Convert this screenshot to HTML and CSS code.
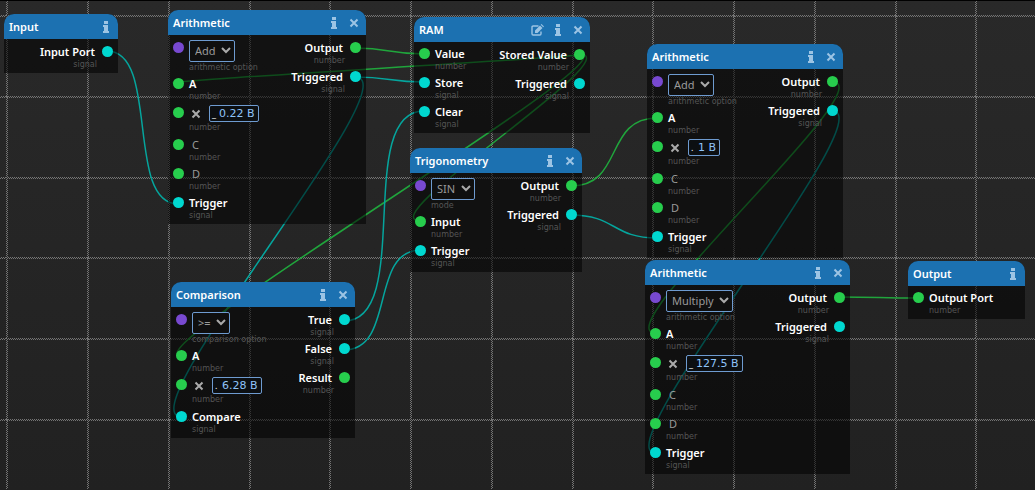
FILE: index.html
```
<!DOCTYPE html>
<html lang="en">

<head>
    <meta charset="UTF-8">
    <meta name="viewport" content="width=device-width, initial-scale=1.0">
    <title>Node Editor</title>
    <link rel="stylesheet" href="styles.css">
</head>

<body>
    <!-- shared icons -->
    <svg class="defs" aria-hidden="true">
        <symbol id="icon-info" viewBox="0 0 8 12">
            <path d="M2 0h4v3H2zM1 4h5v6h1v2H1v-2h1V6H1z" fill="currentColor" />
        </symbol>
        <symbol id="icon-close" viewBox="0 0 10 10">
            <path d="M1.500 1.500l7 7M8.500 1.500l-7 7" stroke="currentColor" stroke-width="2" fill="none" />
        </symbol>
        <symbol id="icon-edit" viewBox="0 0 13 12">
            <path d="M7.500 2H2.200Q1 2 1 3.200V9.800Q1 11 2.200 11H8.800Q10 11 10 9.800V7.500" stroke="currentColor" stroke-width="1.400" fill="none" />
            <path d="M4 9V6.500L9 1.500 11.500 4 6.500 9zM9.700 .8l.8-.8L13 2.500l-.8.8z" fill="currentColor" />
        </symbol>
        <symbol id="icon-chevron" viewBox="0 0 10 7">
            <path d="M1 1l4 4 4-4" stroke="currentColor" stroke-width="2" fill="none" />
        </symbol>
    </svg>

    <main class="board">
        <svg class="wires" aria-hidden="true">
            <defs>
                <pattern id="grid" x="6" y="15" width="323" height="323" patternUnits="userSpaceOnUse">
                    <g fill="none" stroke-width="1" stroke-dasharray="1 1">
                        <path d="M.5 0V323M81.500 0V323M162.500 0V323M243.500 0V323" />
                        <path d="M1.500 1V323M82.500 1V323M163.500 1V323M244.500 1V323" />
                        <path d="M0 .5H323M0 81.500H323M0 162.500H323M0 242.500H323" />
                        <path d="M1 1.500H323M1 82.500H323M1 163.500H323M1 243.500H323" />
                    </g>
                </pattern>
            </defs>
            <rect class="grid" width="100%" height="100%" fill="url(#grid)" />
            <path class="signal" d="M107 51C160 51 125 204 178 204" />
            <path class="number" d="M355 48C390 48 389 54 424 54" />
            <path class="signal" d="M355 77C390 77 389 82 424 82" />
            <path class="signal" d="M355 77C415 77 122 417 182 417" />
            <path class="number" d="M579 54C639 54 118 83 178 83" />
            <path class="number" d="M579 54C634 54 366 221 421 221" />
            <path class="number" d="M579 54C639 54 122 356 182 356" />
            <path class="signal" d="M344 321C414 321 354 111 424 111" />
            <path class="signal" d="M344 350C396 350 369 250 421 250" />
            <path class="number" d="M571 186C624 186 604 118 657 118" />
            <path class="signal" d="M571 215C616 215 612 238 657 238" />
            <path class="number" d="M832 82C887 82 601 333 656 333" />
            <path class="signal" d="M832 111C887 111 601 453 656 453" />
            <path class="number" d="M839 297C879 297 879 298 919 298" />
        </svg>

        <section class="node input-node">
            <header>
                <h2>Input</h2>
                <button aria-label="Info"><svg class="info"><use href="#icon-info" /></svg></button>
            </header>
            <div class="ports">
                <div class="side"></div>
                <div class="side out">
                    <div class="port signal"><i></i><b>Input Port</b><small>signal</small></div>
                </div>
            </div>
        </section>

        <section class="node add-node">
            <header>
                <h2>Arithmetic</h2>
                <button aria-label="Info"><svg class="info"><use href="#icon-info" /></svg></button>
                <button aria-label="Close"><svg class="close"><use href="#icon-close" /></svg></button>
            </header>
            <div class="ports">
                <div class="side">
                    <div class="port option"><i></i>
                        <span class="pick"><select id="op1"><option>Add</option></select><svg><use href="#icon-chevron" /></svg></span>
                        <small><label for="op1">arithmetic option</label></small>
                    </div>
                    <div class="port"><i></i><b>A</b><small>number</small></div>
                    <div class="port constant"><i></i>
                        <span class="entry"><button aria-label="Clear value"><svg class="close"><use href="#icon-close" /></svg></button><span class="box"><em>_</em><input id="b1" type="text" value="0.22 B"></span></span>
                        <small><label for="b1">number</label></small>
                    </div>
                    <div class="port unset"><i></i><b>C</b><small>number</small></div>
                    <div class="port unset"><i></i><b>D</b><small>number</small></div>
                    <div class="port signal"><i></i><b>Trigger</b><small>signal</small></div>
                </div>
                <div class="side out">
                    <div class="port"><i></i><b>Output</b><small>number</small></div>
                    <div class="port signal"><i></i><b>Triggered</b><small>signal</small></div>
                </div>
            </div>
        </section>

        <section class="node ram-node">
            <header>
                <h2>RAM</h2>
                <button aria-label="Edit"><svg class="edit"><use href="#icon-edit" /></svg></button>
                <button aria-label="Info"><svg class="info"><use href="#icon-info" /></svg></button>
                <button aria-label="Close"><svg class="close"><use href="#icon-close" /></svg></button>
            </header>
            <div class="ports">
                <div class="side">
                    <div class="port"><i></i><b>Value</b><small>number</small></div>
                    <div class="port signal"><i></i><b>Store</b><small>signal</small></div>
                    <div class="port signal"><i></i><b>Clear</b><small>signal</small></div>
                </div>
                <div class="side out">
                    <div class="port"><i></i><b>Stored Value</b><small>number</small></div>
                    <div class="port signal"><i></i><b>Triggered</b><small>signal</small></div>
                </div>
            </div>
        </section>

        <section class="node trig-node">
            <header>
                <h2>Trigonometry</h2>
                <button aria-label="Info"><svg class="info"><use href="#icon-info" /></svg></button>
                <button aria-label="Close"><svg class="close"><use href="#icon-close" /></svg></button>
            </header>
            <div class="ports">
                <div class="side">
                    <div class="port option"><i></i>
                        <span class="pick"><select id="mode"><option>SIN</option></select><svg><use href="#icon-chevron" /></svg></span>
                        <small><label for="mode">mode</label></small>
                    </div>
                    <div class="port"><i></i><b>Input</b><small>number</small></div>
                    <div class="port signal"><i></i><b>Trigger</b><small>signal</small></div>
                </div>
                <div class="side out">
                    <div class="port"><i></i><b>Output</b><small>number</small></div>
                    <div class="port signal"><i></i><b>Triggered</b><small>signal</small></div>
                </div>
            </div>
        </section>

        <section class="node compare-node">
            <header>
                <h2>Comparison</h2>
                <button aria-label="Info"><svg class="info"><use href="#icon-info" /></svg></button>
                <button aria-label="Close"><svg class="close"><use href="#icon-close" /></svg></button>
            </header>
            <div class="ports">
                <div class="side">
                    <div class="port option"><i></i>
                        <span class="pick"><select id="cmp"><option>&gt;=</option></select><svg><use href="#icon-chevron" /></svg></span>
                        <small><label for="cmp">comparison option</label></small>
                    </div>
                    <div class="port"><i></i><b>A</b><small>number</small></div>
                    <div class="port constant"><i></i>
                        <span class="entry"><button aria-label="Clear value"><svg class="close"><use href="#icon-close" /></svg></button><span class="box"><em>.</em><input id="b2" type="text" value="6.28 B"></span></span>
                        <small><label for="b2">number</label></small>
                    </div>
                    <div class="port signal"><i></i><b>Compare</b><small>signal</small></div>
                </div>
                <div class="side out">
                    <div class="port signal"><i></i><b>True</b><small>signal</small></div>
                    <div class="port signal"><i></i><b>False</b><small>signal</small></div>
                    <div class="port"><i></i><b>Result</b><small>number</small></div>
                </div>
            </div>
        </section>

        <section class="node increment-node">
            <header>
                <h2>Arithmetic</h2>
                <button aria-label="Info"><svg class="info"><use href="#icon-info" /></svg></button>
                <button aria-label="Close"><svg class="close"><use href="#icon-close" /></svg></button>
            </header>
            <div class="ports">
                <div class="side">
                    <div class="port option"><i></i>
                        <span class="pick"><select id="op2"><option>Add</option></select><svg><use href="#icon-chevron" /></svg></span>
                        <small><label for="op2">arithmetic option</label></small>
                    </div>
                    <div class="port"><i></i><b>A</b><small>number</small></div>
                    <div class="port constant"><i></i>
                        <span class="entry"><button aria-label="Clear value"><svg class="close"><use href="#icon-close" /></svg></button><span class="box short"><em>.</em><input id="b3" type="text" value="1 B"></span></span>
                        <small><label for="b3">number</label></small>
                    </div>
                    <div class="port unset"><i></i><b>C</b><small>number</small></div>
                    <div class="port unset"><i></i><b>D</b><small>number</small></div>
                    <div class="port signal"><i></i><b>Trigger</b><small>signal</small></div>
                </div>
                <div class="side out">
                    <div class="port"><i></i><b>Output</b><small>number</small></div>
                    <div class="port signal"><i></i><b>Triggered</b><small>signal</small></div>
                </div>
            </div>
        </section>

        <section class="node multiply-node">
            <header>
                <h2>Arithmetic</h2>
                <button aria-label="Info"><svg class="info"><use href="#icon-info" /></svg></button>
                <button aria-label="Close"><svg class="close"><use href="#icon-close" /></svg></button>
            </header>
            <div class="ports">
                <div class="side">
                    <div class="port option"><i></i>
                        <span class="pick"><select id="op3"><option>Multiply</option></select><svg><use href="#icon-chevron" /></svg></span>
                        <small><label for="op3">arithmetic option</label></small>
                    </div>
                    <div class="port"><i></i><b>A</b><small>number</small></div>
                    <div class="port constant"><i></i>
                        <span class="entry"><button aria-label="Clear value"><svg class="close"><use href="#icon-close" /></svg></button><span class="box long"><em>_</em><input id="b4" type="text" value="127.5 B"></span></span>
                        <small><label for="b4">number</label></small>
                    </div>
                    <div class="port unset"><i></i><b>C</b><small>number</small></div>
                    <div class="port unset"><i></i><b>D</b><small>number</small></div>
                    <div class="port signal"><i></i><b>Trigger</b><small>signal</small></div>
                </div>
                <div class="side out">
                    <div class="port"><i></i><b>Output</b><small>number</small></div>
                    <div class="port signal"><i></i><b>Triggered</b><small>signal</small></div>
                </div>
            </div>
        </section>

        <section class="node output-node">
            <header>
                <h2>Output</h2>
                <button aria-label="Info"><svg class="info"><use href="#icon-info" /></svg></button>
            </header>
            <div class="ports">
                <div class="side">
                    <div class="port"><i></i><b>Output Port</b><small>number</small></div>
                </div>
            </div>
        </section>
    </main>
</body>

</html>
```

FILE: styles.css
```
body {
    margin: 0;
    font-family: "Noto Sans", sans-serif;
    font-size: 11px;
    color: #fff;
}

.defs {
    display: none;
}

.board {
    position: relative;
    height: 100vh;
    box-sizing: border-box;
    border-top: 1px solid #000;
    background: linear-gradient(#292929, #212121);
    overflow: hidden;
}

/* grid and wires sit behind the nodes */
.wires {
    position: absolute;
    top: -1px;
    left: 0;
    width: 100%;
    height: 100%;
}

.wires path {
    fill: none;
    stroke-width: 1.5;
}

.wires pattern path {
    stroke: #747474;
    stroke-width: 1;
}

.wires .number {
    stroke: #20a53c;
}

.wires .signal {
    stroke: #05a59d;
}

.node {
    position: absolute;
    background: rgba(0, 0, 0, 0.54);
    border-radius: 10px 10px 0 0;
}

.input-node { left: 4px; top: 13px; width: 114px; }
.add-node { left: 168px; top: 9px; width: 198px; }
.ram-node { left: 414px; top: 16px; width: 176px; }
.trig-node { left: 410px; top: 147px; width: 172px; }
.compare-node { left: 171px; top: 281px; width: 184px; }
.increment-node { left: 647px; top: 43px; width: 196px; }
.multiply-node { left: 645px; top: 259px; width: 205px; }
.output-node { left: 908px; top: 260px; width: 117px; }

.node header {
    display: flex;
    align-items: center;
    height: 25px;
    padding: 0 7px 0 5px;
    border-radius: 10px 10px 0 0;
    background: #1c71b1;
}

h2 {
    flex: 1;
    margin: 0;
    font-size: 11px;
    font-weight: 600;
    line-height: 16px;
}

button {
    display: flex;
    align-items: center;
    justify-content: center;
    padding: 0;
    border: none;
    background: none;
    color: #9cc4e4;
    cursor: pointer;
}

header button {
    width: 11px;
    margin-left: 9px;
}

.info {
    width: 8px;
    height: 12px;
}

.close {
    width: 10px;
    height: 10px;
}

.edit {
    flex: none;
    width: 13px;
    height: 12px;
}

.ports {
    display: flex;
    justify-content: space-between;
    padding: 3px 5px 1px;
}

.port {
    display: grid;
    grid-template-columns: 11px auto;
    grid-template-rows: 17px 10px;
    column-gap: 5px;
    align-items: center;
    align-content: start;
    justify-content: start;
    height: 29px;
}

.port i {
    width: 11px;
    height: 11px;
    border-radius: 50%;
    background: #27cd4d;
}

.port.signal i {
    background: #00d8d0;
}

.port.option i {
    background: #7849d0;
}

.port b {
    font-weight: 600;
    line-height: 17px;
}

.port small {
    grid-column: 2;
    font-family: "DejaVu Sans", sans-serif;
    font-size: 8px;
    line-height: 10px;
    color: #555;
}

.port.unset b {
    padding-left: 3px;
    font-weight: 400;
    color: #999;
}

/* outputs mirror the inputs */
.out {
    padding-top: 1px;
}

.out .port {
    grid-template-columns: auto 11px;
    justify-content: end;
    text-align: right;
}

.out .port i {
    grid-column: 2;
    grid-row: 1;
}

.out .port b {
    grid-column: 1;
    grid-row: 1;
    padding-right: 2px;
}

.out .port small {
    grid-column: 1;
}

.port.option {
    grid-template-rows: 25px 10px;
    height: 37px;
}

.option i {
    align-self: start;
    margin-top: 4px;
}

.pick {
    position: relative;
    justify-self: start;
    display: flex;
}

.pick select {
    appearance: none;
    height: 22px;
    padding: 0 18px 0 5px;
    border: 1px solid #6e9bd0;
    border-radius: 2px;
    background: #0f0f0f;
    color: #9a9a9a;
    font-family: inherit;
    font-size: 11px;
}

.pick svg {
    position: absolute;
    right: 4px;
    top: 7px;
    width: 10px;
    height: 7px;
    color: #aaa;
    pointer-events: none;
}

.port.constant {
    grid-template-rows: 19px 10px;
    height: 32px;
}

.constant i {
    align-self: start;
    margin-top: 3px;
}

.entry {
    display: flex;
    align-items: center;
    gap: 6px;
}

.entry button {
    width: 14px;
    color: #aaa;
}

.box {
    display: flex;
    align-items: center;
    box-sizing: border-box;
    width: 50px;
    height: 17px;
    padding: 0 2px;
    border: 1px solid #6e9bd0;
    border-radius: 2px;
    background: #0c0f12;
}

.box.short {
    width: 32px;
}

.box.long {
    width: 57px;
}

.box em {
    width: 7px;
    font-size: 9px;
    font-style: normal;
}

.box input {
    flex: 1;
    min-width: 0;
    width: 0;
    padding: 0;
    border: none;
    outline: none;
    background: none;
    color: #8fc3f8;
    font-family: "DejaVu Sans", sans-serif;
    font-size: 11px;
}
```
